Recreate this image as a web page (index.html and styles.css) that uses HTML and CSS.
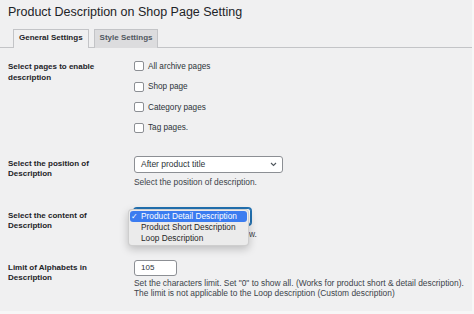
FILE: index.html
```html
<!DOCTYPE html>
<html lang="en">
<head>
    <meta charset="UTF-8">
    <meta name="viewport" content="width=device-width, initial-scale=1.0">
    <title>Product Description on Shop Page Setting</title>
    <link rel="stylesheet" href="styles.css">
</head>
<body>
    <div class="wrap">
        <h1>Product Description on Shop Page Setting</h1>

        <!-- Tabs -->
        <nav class="tabs">
            <a class="tab active">General Settings</a>
            <a class="tab">Style Settings</a>
        </nav>

        <div class="form">
            <div class="row row-pages">
                <div class="label">Select pages to enable description</div>
                <div class="field">
                    <div class="option"><span class="box"></span>All archive pages</div>
                    <div class="option"><span class="box"></span>Shop page</div>
                    <div class="option"><span class="box"></span>Category pages</div>
                    <div class="option"><span class="box"></span>Tag pages.</div>
                </div>
            </div>

            <div class="row">
                <div class="label">Select the position of Description</div>
                <div class="field">
                    <div class="select">
                        <span>After product title</span>
                        <svg width="7" height="5" viewBox="0 0 7 5"><path d="M1 1l2.5 2.5L6 1" fill="none" stroke="#50575e" stroke-width="1.1"/></svg>
                    </div>
                    <div class="description">Select the position of description.</div>
                </div>
            </div>

            <div class="row">
                <div class="label">Select the content of Description</div>
                <div class="field">
                    <div class="select-wrap">
                        <div class="select focus"></div>
                        <div class="popup">
                            <div class="item selected"><span class="check">✓</span>Product Detail Description</div>
                            <div class="item"><span class="check"></span>Product Short Description</div>
                            <div class="item"><span class="check"></span>Loop Description</div>
                        </div>
                    </div>
                    <div class="description">Select which description to show.</div>
                </div>
            </div>

            <div class="row">
                <div class="label">Limit of Alphabets in Description</div>
                <div class="field">
                    <div class="input">105</div>
                    <div class="description desc-limit">Set the characters limit. Set "0" to show all. (Works for product short &amp; detail description).<br>The limit is not applicable to the Loop description (Custom description)</div>
                </div>
            </div>
        </div>
    </div>
</body>
</html>
```

FILE: styles.css
```css
/* General Styles */
* {
    margin: 0;
    padding: 0;
    box-sizing: border-box;
}

body {
    font-family: "Liberation Sans", Arial, sans-serif;
    font-size: 8px;
    color: #3c434a;
    background: #f7f7f7;
    overflow: hidden;
}

.wrap {
    background: #f0f0f1;
    margin-right: 2px;
    height: 311px;
}

h1 {
    padding: 4px 0 0 8px;
    font-size: 12.5px;
    line-height: 16px;
    font-weight: 400;
    color: #1d2327;
}

/* Tabs */
.tabs {
    display: flex;
    align-items: flex-start;
    height: 19px;
    margin-top: 9px;
    padding-left: 13px;
    border-bottom: 1px solid #c3c4c7;
}

.tab {
    height: 19px;
    padding: 0 5px;
    margin-right: 5px;
    line-height: 15px;
    border: 1px solid #c3c4c7;
    border-bottom: none;
    background: #dcdcde;
    color: #50575e;
    font-weight: 700;
    font-size: 8px;
}

.tab.active {
    background: #f0f0f1;
    color: #1d2327;
}

/* Form rows */
.form {
    padding-left: 8px;
}

.row {
    display: grid;
    grid-template-columns: 126px 1fr;
    padding: 17.5px 0 3px;
}

.row-pages {
    padding: 8px 0 0;
}

.label {
    padding: 3px 16px 0 0;
    font-weight: 700;
    line-height: 10px;
    color: #1d2327;
}

.row-pages .label {
    padding-top: 5px;
    line-height: 11px;
}

.option {
    display: flex;
    align-items: center;
    gap: 4px;
    height: 20.5px;
    color: #2c3338;
    font-size: 8.2px;
}

.box {
    width: 10px;
    height: 10px;
    border: 1px solid #8c8f94;
    border-radius: 2px;
    background: #fff;
}

.select {
    display: flex;
    align-items: center;
    justify-content: space-between;
    width: 149px;
    height: 17px;
    padding: 0 5px 0 6px;
    border: 1px solid #8c8f94;
    border-radius: 3px;
    background: #fff;
    color: #2c3338;
    font-size: 8.5px;
}

.select-wrap {
    position: relative;
    width: 117px;
}

.select.focus {
    width: 117px;
    border-color: #2271b1;
    box-shadow: 0 0 0 1px #2271b1;
}

.popup {
    position: absolute;
    left: -6px;
    top: 1px;
    width: 121px;
    padding: 1px;
    background: #ebebeb;
    border: 1px solid rgba(0, 0, 0, 0.12);
    border-radius: 4px;
    box-shadow: 0 3px 9px rgba(0, 0, 0, 0.22);
    font-size: 8.3px;
    color: #262626;
}

.item {
    display: flex;
    line-height: 11px;
    border-radius: 3px;
}

.item.selected {
    background: #3b7cf0;
    color: #fff;
}

.check {
    width: 11px;
    padding-left: 1px;
}

.description {
    margin-top: 4.5px;
    line-height: 10px;
    color: #3c434a;
    font-size: 8.4px;
}

.input {
    width: 43px;
    height: 16.5px;
    padding-left: 6px;
    line-height: 14.5px;
    border: 1px solid #8c8f94;
    border-radius: 3px;
    background: #fff;
    color: #2c3338;
}

.desc-limit {
    margin-top: 2px;
}
```
